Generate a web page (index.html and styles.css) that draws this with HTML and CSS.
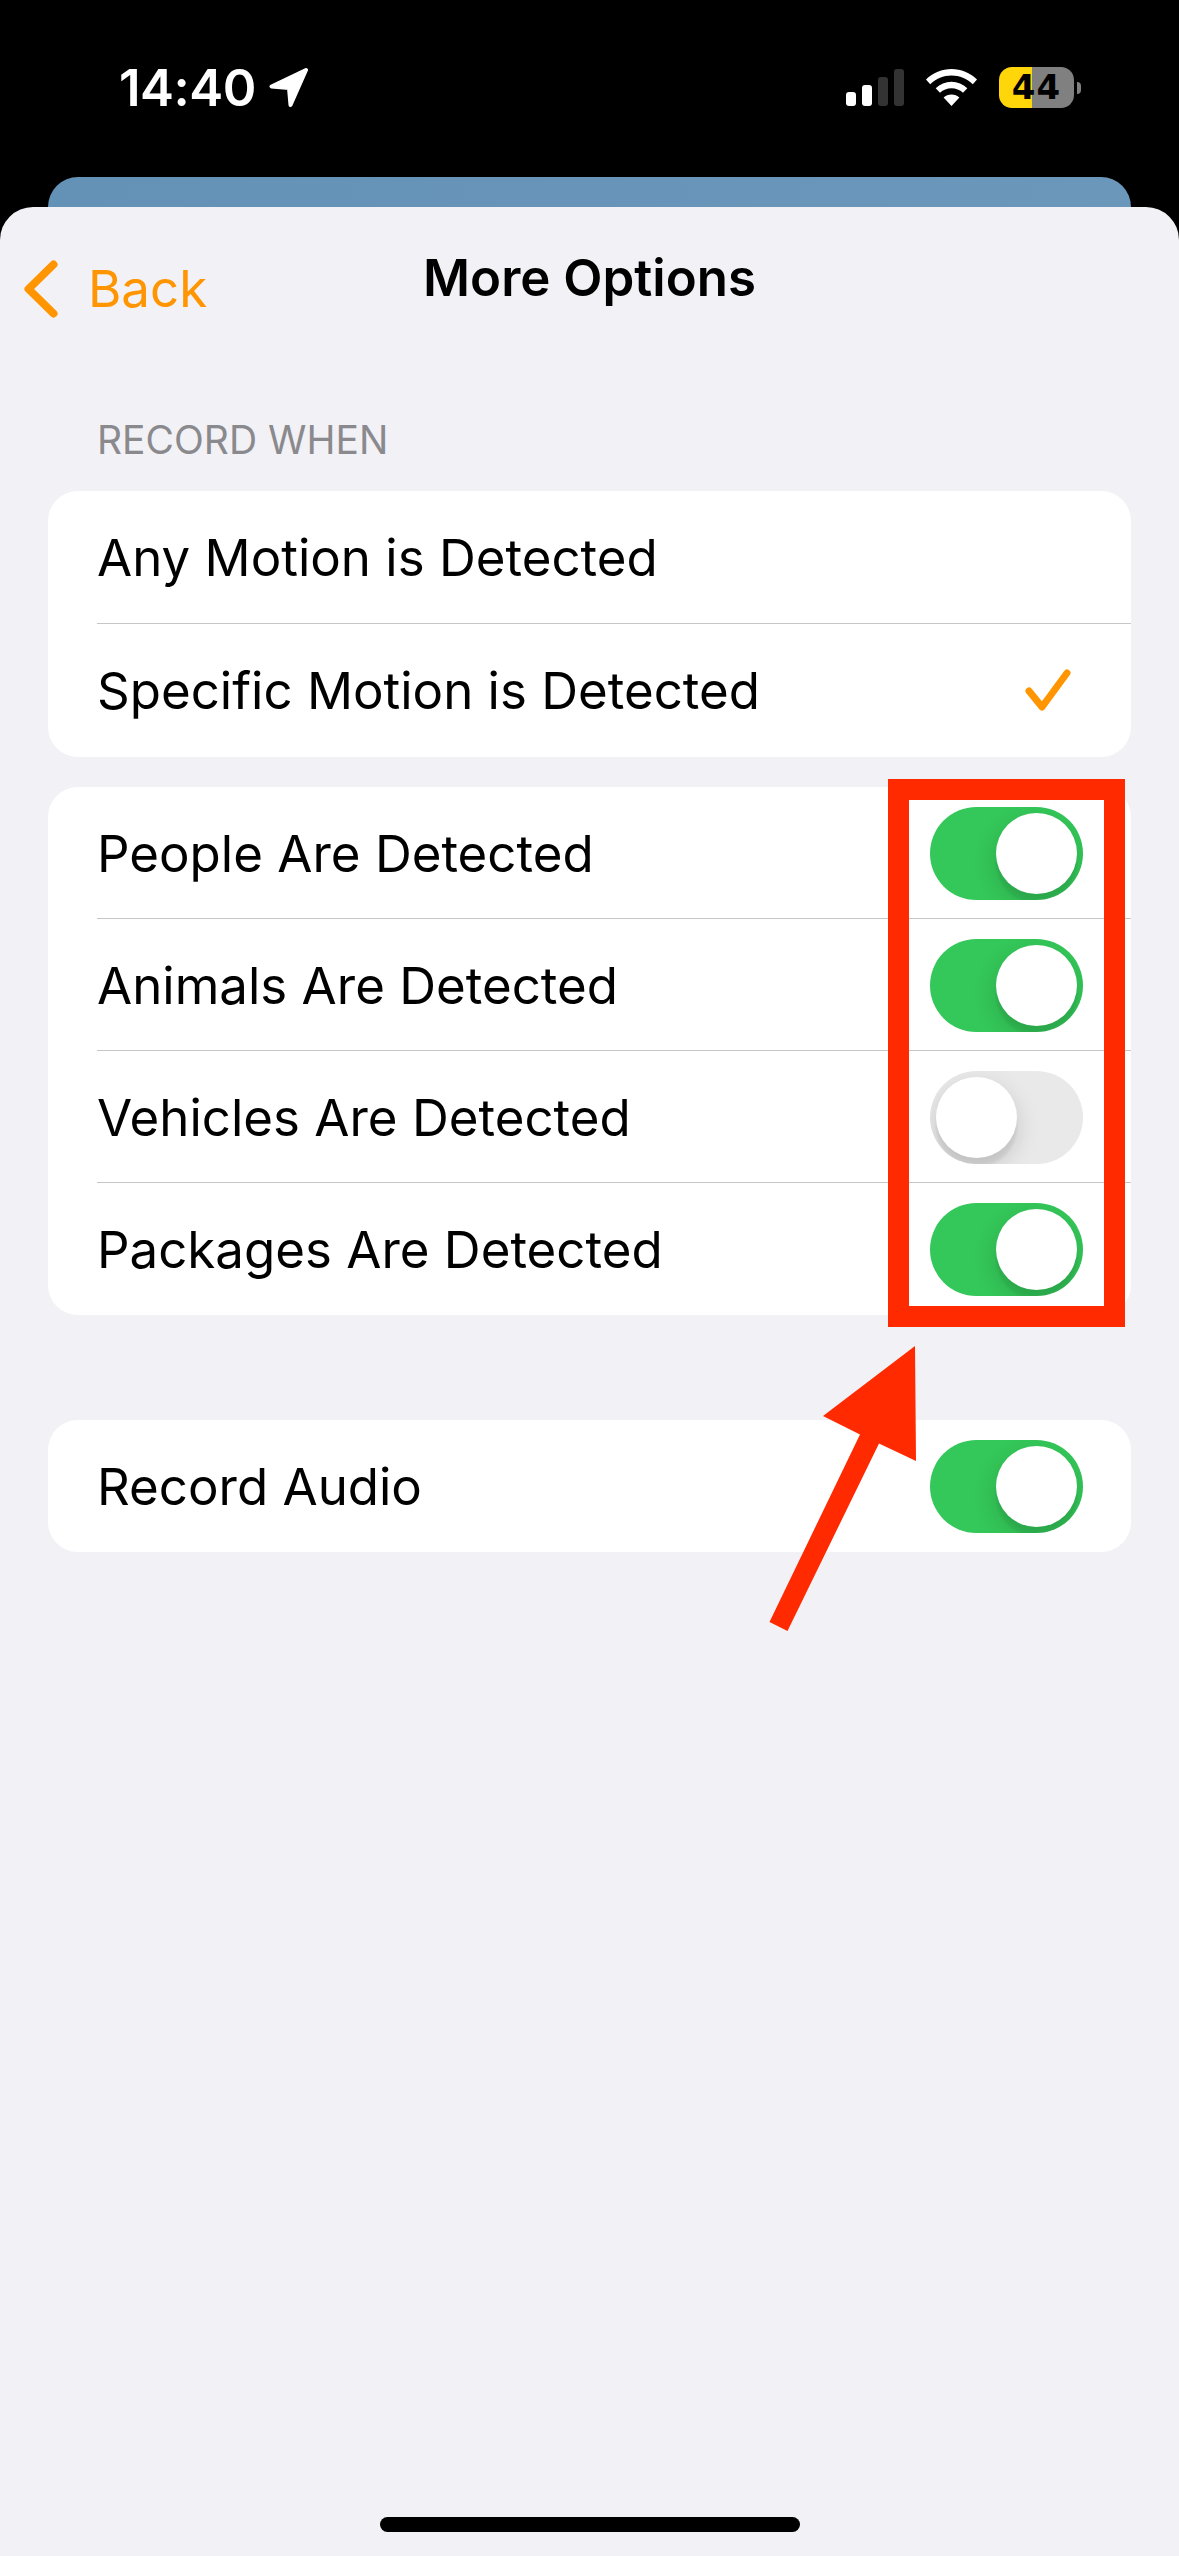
FILE: index.html
```html
<!DOCTYPE html>
<html lang="en">
<head>
<meta charset="utf-8">
<title>More Options</title>
<link rel="stylesheet" href="styles.css">
</head>
<body>
<div class="screen">
  <header class="status">
    <div class="status-left">
      <span class="time">14:40</span>
      <svg class="loc" width="39" height="39" viewBox="0 0 39 39"><path d="M37 2 L2.500 18.500 L20 20 L21.500 37 Z" fill="#fff" stroke="#fff" stroke-width="4" stroke-linejoin="round"/></svg>
    </div>
    <div class="status-right">
      <div class="signal">
        <span class="bar bar1"></span><span class="bar bar2"></span><span class="bar bar3 dim"></span><span class="bar bar4 dim"></span>
      </div>
      <svg class="wifi" width="51" height="37" viewBox="0 0 51 37"><path d="M25.500 0 C35 0 44 3.800 51 10.500 L46.800 15.200 C41 9.700 33.500 6.600 25.500 6.600 C17.500 6.600 10 9.700 4.200 15.200 L0 10.500 C7 3.800 16 0 25.500 0 Z M25.500 12.800 C31.500 12.800 37 15.100 41.300 19.200 L37 23.800 C33.900 20.900 29.800 19.300 25.500 19.300 C21.200 19.300 17.100 20.900 14 23.800 L9.700 19.200 C14 15.100 19.500 12.800 25.500 12.800 Z M25.500 25.400 C28.600 25.400 31.300 26.500 33.400 28.500 L25.500 37 L17.600 28.500 C19.700 26.500 22.400 25.400 25.500 25.400 Z" fill="#fff"/></svg>
      <div class="battery">
        <div class="battery-body">44</div>
        <span class="battery-cap"></span>
      </div>
    </div>
  </header>
  <div class="backcard"></div>
  <main class="sheet">
    <nav class="nav">
      <div class="back">
        <svg class="chevron" width="34" height="58" viewBox="0 0 34 58"><path d="M29.500 4.500 L4.500 29 L29.500 53.500" fill="none" stroke="#ff9500" stroke-width="8" stroke-linecap="round" stroke-linejoin="round"/></svg>
        <span class="back-text">Back</span>
      </div>
      <h1 class="title">More Options</h1>
    </nav>
    <div class="section-label">RECORD WHEN</div>
    <section class="card card-first">
      <div class="row"><span class="row-text">Any Motion is Detected</span></div>
      <div class="row">
        <span class="row-text">Specific Motion is Detected</span>
        <svg class="check" width="46" height="44" viewBox="0 0 46 44"><path d="M4 22 L17 38 L42 4" fill="none" stroke="#ff9500" stroke-width="7" stroke-linecap="round" stroke-linejoin="round"/></svg>
      </div>
    </section>
    <section class="card card-second">
      <div class="row"><span class="row-text">People Are Detected</span><span class="toggle on"><span class="knob"></span></span></div>
      <div class="row"><span class="row-text">Animals Are Detected</span><span class="toggle on"><span class="knob"></span></span></div>
      <div class="row"><span class="row-text">Vehicles Are Detected</span><span class="toggle"><span class="knob"></span></span></div>
      <div class="row"><span class="row-text">Packages Are Detected</span><span class="toggle on"><span class="knob"></span></span></div>
    </section>
    <section class="card card-third">
      <div class="row"><span class="row-text">Record Audio</span><span class="toggle on"><span class="knob"></span></span></div>
    </section>
    <div class="home-bar"></div>
  </main>
  <svg class="annotation" width="1179" height="2556" viewBox="0 0 1179 2556">
    <rect x="898.500" y="789.500" width="216" height="527" fill="none" stroke="#ff2a00" stroke-width="21"/>
    <polygon points="915,1346 916,1461 879,1443.500 787.500,1631 769.500,1622 860,1434.500 823,1416" fill="#ff2a00"/>
  </svg>
</div>
</body>
</html>
```
FILE: styles.css
```css
* { box-sizing: border-box; }
html, body { margin: 0; padding: 0; background: #000; }
body { font-family: Inter, "Liberation Sans", sans-serif; }
.screen { position: relative; width: 1179px; height: 2556px; display: flex; flex-direction: column; overflow: hidden; }

.status { height: 177px; flex: none; display: flex; justify-content: space-between; align-items: flex-start; padding: 67px 98px 0 119px; color: #fff; }
.status-left { display: flex; align-items: center; gap: 13px; height: 41px; }
.time { font-size: 51px; font-weight: 600; line-height: 41px; letter-spacing: -0.5px; }
.loc { display: block; }
.status-right { display: flex; align-items: flex-start; }
.signal { display: flex; align-items: flex-end; gap: 6px; height: 37px; margin-top: 2px; }
.bar { width: 10px; border-radius: 3px; background: #fff; }
.bar1 { height: 14px; }
.bar2 { height: 21px; }
.bar3 { height: 29px; }
.bar4 { height: 37px; }
.dim { background: #333; }
.wifi { margin: 2px 22px 0; display: block; }
.battery { display: flex; align-items: center; gap: 3px; }
.battery-body { width: 75px; height: 41px; border-radius: 13px; background: linear-gradient(90deg, #ffd60a 44%, #808080 44%); color: #000; font-size: 34px; font-weight: 700; line-height: 41px; text-align: center; letter-spacing: 1px; font-family: "DejaVu Sans", sans-serif; }
.battery-cap { width: 4px; height: 12px; border-radius: 0 6px 6px 0; background: #808080; }

.backcard { height: 30px; flex: none; margin: 0 48px; border-radius: 30px 30px 0 0; background: linear-gradient(90deg, #6491b6, #6b97bb); }

.sheet { flex: 1; display: flex; flex-direction: column; background: #f2f1f6; border-radius: 33px 33px 0 0; padding: 0 48px; }

.nav { position: relative; height: 142px; flex: none; display: flex; align-items: center; justify-content: center; }
.back { position: absolute; left: -24px; top: 51px; display: flex; align-items: center; gap: 30px; color: #ff9500; }
.chevron { display: block; }
.back-text { font-size: 51px; line-height: 62px; }
.title { margin: 0; font-size: 51px; font-weight: 600; line-height: 62px; color: #000; position: relative; top: 0; }

.section-label { margin: 67px 0 0 49px; height: 75px; font-size: 39px; line-height: 47px; color: #8a8a8e; }

.card { background: #fff; border-radius: 30px; overflow: hidden; flex: none; }
.card-second { margin-top: 30px; }
.card-third { margin-top: 105px; }

.row { position: relative; height: 132px; padding: 1px 48px 0 49px; display: flex; align-items: center; justify-content: space-between; }
.card-first .row { height: 133px; }
.row + .row::before { content: ""; position: absolute; left: 49px; right: 0; top: -1px; height: 1px; background: #c6c6c8; }
.row-text { font-size: 51px; line-height: 62px; color: #000; }
.check { display: block; margin-right: 12px; }

.toggle { display: flex; flex: none; width: 153px; height: 93px; padding: 6px; border-radius: 46.5px; background: #e9e9ea; overflow: hidden; }
.toggle.on { background: #34c759; justify-content: flex-end; }
.knob { width: 81px; height: 81px; border-radius: 50%; background: #fff; box-shadow: 0 9px 24px rgba(0,0,0,.15), 0 9px 3px rgba(0,0,0,.06); }

.home-bar { width: 420px; height: 15px; border-radius: 8px; background: #000; margin: auto auto 24px; }

.annotation { position: absolute; left: 0; top: 0; pointer-events: none; }
```
